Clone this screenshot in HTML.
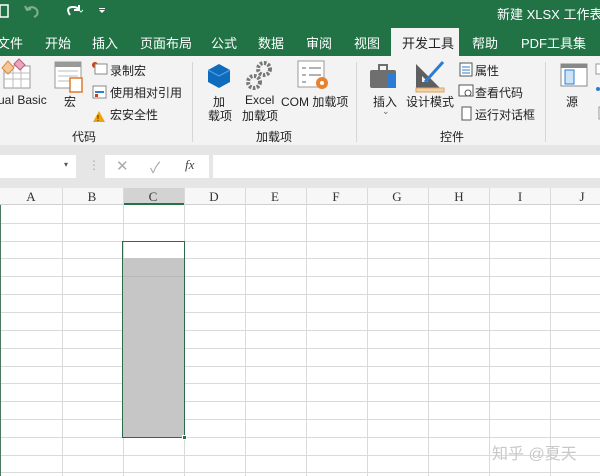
<!DOCTYPE html>
<html><head><meta charset="utf-8"><style>
*{margin:0;padding:0;box-sizing:border-box}
body{width:600px;height:476px;overflow:hidden;position:relative;background:#fff;font-family:"Liberation Sans","Noto Sans CJK SC",sans-serif;}
.a{position:absolute;white-space:nowrap}
.tab{position:absolute;top:33px;font-size:13px;color:#fff}
.t{position:absolute;font-size:12px;color:#222;white-space:nowrap}
.vl{position:absolute;width:1px;background:#dadada}
.hl{position:absolute;height:1px;left:0;width:600px;background:#dadada}
.col{position:absolute;top:189px;font-family:"Liberation Serif",serif;font-size:13px;color:#333;width:20px;text-align:center}
</style></head><body>
<!-- title bar -->
<div class="a" style="left:0;top:0;width:600px;height:56px;background:#217346"></div>
<svg class="a" style="left:0;top:0" width="120" height="26">
<rect x="0" y="5" width="8" height="12" fill="none" stroke="#fff" stroke-width="1.5"/>
<path d="M27 9 q6 -4 10 1 q2 5 -3 7" fill="none" stroke="#7fae92" stroke-width="2"/><path d="M25 6 l2 4 l4 -1" fill="none" stroke="#7fae92" stroke-width="2"/>
<path d="M70 15 q-5 -8 3 -8 q4 0 5 2" fill="none" stroke="#fff" stroke-width="2"/><path d="M79 5 l0 5 l-5 0" fill="none" stroke="#fff" stroke-width="2"/>
<path d="M79 10 l2 2 l2 -2" fill="none" stroke="#cfe" stroke-width="1"/>
<path d="M99 10 l3 3 l3 -3z" fill="#fff"/><rect x="99" y="8" width="6" height="1" fill="#fff"/>
</svg>
<div class="a" style="left:497px;top:4px;font-size:13px;color:#fff">新建 XLSX 工作表 (2</div>
<!-- tabs -->
<div class="a" style="left:391px;top:28px;width:68px;height:29px;background:#f3f3f3"></div>
<div class="tab" style="left:-3px">文件</div>
<div class="tab" style="left:45px">开始</div>
<div class="tab" style="left:92px">插入</div>
<div class="tab" style="left:140px">页面布局</div>
<div class="tab" style="left:211px">公式</div>
<div class="tab" style="left:258px">数据</div>
<div class="tab" style="left:306px">审阅</div>
<div class="tab" style="left:354px">视图</div>
<div class="tab" style="left:402px;color:#222">开发工具</div>
<div class="tab" style="left:472px">帮助</div>
<div class="tab" style="left:521px">PDF工具集</div>
<!-- ribbon -->
<div class="a" style="left:0;top:56px;width:600px;height:89px;background:#f3f3f3"></div>
<div class="a" style="left:192px;top:62px;width:1px;height:80px;background:#d6d6d6"></div>
<div class="a" style="left:356px;top:62px;width:1px;height:80px;background:#d6d6d6"></div>
<div class="a" style="left:545px;top:62px;width:1px;height:80px;background:#d6d6d6"></div>
<svg class="a" style="left:0;top:56px" width="600" height="45">
<!-- VB -->
<rect x="4" y="10" width="26" height="22" fill="#fff" stroke="#999"/><path d="M4 17h26M4 23h26M13 10v22M21 10v22" stroke="#bbb"/>
<path d="M2 12 l6 -7 l6 7 l-6 6z" fill="#f6c79a" stroke="#d9893b"/><path d="M14 8 l5 -5 l6 6 l-5 5z" fill="#e9a6c0" stroke="#c0587f"/>
<!-- macro -->
<rect x="55" y="6" width="26" height="26" fill="#fff" stroke="#999"/><rect x="55" y="6" width="26" height="5" fill="#999"/><path d="M58 15h20M58 20h20M58 25h14" stroke="#bbb"/>
<rect x="70" y="22" width="12" height="14" fill="#fff" stroke="#e07a2c" stroke-width="1.5"/>
<!-- small icons -->
<circle cx="95" cy="9" r="3" fill="#d83b01"/><rect x="95" y="8" width="12" height="10" fill="#fff" stroke="#888"/>
<rect x="93" y="30" width="13" height="12" fill="#fff" stroke="#888"/><path d="M95 36h9" stroke="#2b7cd3" stroke-width="2"/><rect x="95" y="38" width="3" height="3" fill="#d83b01"/>
<!-- cube -->
<path d="M219 8 l11 6 v12 l-11 6 l-11 -6 v-12z" fill="#0f6cbd"/><path d="M208 14 l11 6 l11 -6" stroke="#5aa0e6" fill="none"/>
<!-- gears -->
<circle cx="264" cy="13" r="6" fill="none" stroke="#777" stroke-width="4" stroke-dasharray="2.5 1.5"/><circle cx="254" cy="26" r="6" fill="none" stroke="#777" stroke-width="4" stroke-dasharray="2.5 1.5"/>
<!-- COM -->
<rect x="298" y="5" width="26" height="26" fill="#fff" stroke="#999"/><path d="M302 12h4M309 12h12M302 19h4M309 19h12M302 26h4" stroke="#666"/>
<circle cx="322" cy="27" r="6" fill="#e8822e"/><circle cx="322" cy="27" r="2" fill="#fff"/>
<!-- insert -->
<rect x="370" y="14" width="26" height="18" rx="2" fill="#6f6f6f"/><rect x="379" y="9" width="8" height="6" fill="none" stroke="#6f6f6f" stroke-width="2"/><rect x="388" y="18" width="8" height="14" fill="#2b7cd3"/>
<!-- design -->
<path d="M416 8 v24 h24z" fill="#5f5f5f"/><path d="M422 20 v6 h6z" fill="#f3f3f3"/><path d="M425 26 l18 -20" stroke="#2b7cd3" stroke-width="3"/><rect x="416" y="32" width="28" height="4" fill="#f3d2a8" stroke="#d9a46a"/>
<!-- small right -->
<rect x="460" y="7" width="12" height="13" fill="#fff" stroke="#555"/><path d="M462 11h8M462 14h8M462 17h8" stroke="#2b7cd3"/>
<rect x="459" y="29" width="14" height="11" fill="#fff" stroke="#555"/><circle cx="468" cy="37" r="3" fill="none" stroke="#555"/>
<rect x="462" y="51" width="9" height="13" fill="#fff" stroke="#555"/>
<!-- source -->
<rect x="561" y="8" width="26" height="22" fill="#fff" stroke="#888"/><rect x="561" y="8" width="26" height="4" fill="#888"/><rect x="565" y="14" width="9" height="14" fill="#cfe3f7" stroke="#2b7cd3"/>
<rect x="596" y="8" width="6" height="10" fill="#fff" stroke="#999"/><circle cx="598" cy="33" r="2" fill="#2b7cd3"/>
</svg>
<svg class="a" style="left:0;top:104px" width="600" height="20"><path d="M93 18 l6 -11 l6 11z" fill="#f0a30a"/><text x="98" y="17" font-size="8" fill="#000" font-family="Liberation Sans" text-anchor="middle">!</text><rect x="462" y="3" width="9" height="13" fill="#fff" stroke="#555"/><rect x="599" y="3" width="6" height="12" fill="#fff" stroke="#999"/></svg>
<div class="t" style="left:-2px;top:93px">ual Basic</div>
<div class="t" style="left:64px;top:93px">宏</div>
<div class="t" style="left:110px;top:62px">录制宏</div>
<div class="t" style="left:110px;top:84px">使用相对引用</div>
<div class="t" style="left:110px;top:106px">宏安全性</div>
<div class="t" style="left:72px;top:128px">代码</div>
<div class="t" style="left:213px;top:93px">加</div>
<div class="t" style="left:208px;top:107px">载项</div>
<div class="t" style="left:245px;top:93px">Excel</div>
<div class="t" style="left:242px;top:107px">加载项</div>
<div class="t" style="left:281px;top:93px">COM 加载项</div>
<div class="t" style="left:256px;top:128px">加载项</div>
<div class="t" style="left:373px;top:93px">插入</div>
<div class="t" style="left:382px;top:106px;font-size:9px;color:#666">⌄</div>
<div class="t" style="left:406px;top:93px">设计模式</div>
<div class="t" style="left:475px;top:62px">属性</div>
<div class="t" style="left:475px;top:84px">查看代码</div>
<div class="t" style="left:475px;top:106px">运行对话框</div>
<div class="t" style="left:440px;top:128px">控件</div>
<div class="t" style="left:566px;top:93px">源</div>
<!-- formula bar -->
<div class="a" style="left:0;top:145px;width:600px;height:43px;background:#e6e6e6"></div>
<div class="a" style="left:0;top:155px;width:76px;height:23px;background:#fff"></div>
<div class="a" style="left:64px;top:160px;font-size:8px;color:#555">▾</div>
<div class="a" style="left:88px;top:158px;font-size:12px;color:#aaa">⋮</div>
<div class="a" style="left:105px;top:155px;width:104px;height:23px;background:#fff"></div>
<div class="a" style="left:116px;top:157px;font-size:15px;color:#aaa">✕</div>
<div class="a" style="left:150px;top:157px;font-size:15px;color:#aaa">✓</div>
<div class="a" style="left:185px;top:157px;font-size:13px;color:#444;font-family:'Liberation Serif',serif;font-style:italic">fx</div>
<div class="a" style="left:213px;top:155px;width:387px;height:23px;background:#fff"></div>
<!-- grid header -->
<div class="a" style="left:0;top:188px;width:600px;height:17px;background:#f7f7f7;border-bottom:1px solid #d0d0d0"></div>
<div class="a" style="left:123px;top:188px;width:61px;height:17px;background:#d3d3d3;border-bottom:2px solid #217346"></div>
<div class="vl" style="left:62px;top:188px;height:288px"></div>
<div class="vl" style="left:123px;top:188px;height:288px"></div>
<div class="vl" style="left:184px;top:188px;height:288px"></div>
<div class="vl" style="left:245px;top:188px;height:288px"></div>
<div class="vl" style="left:306px;top:188px;height:288px"></div>
<div class="vl" style="left:367px;top:188px;height:288px"></div>
<div class="vl" style="left:428px;top:188px;height:288px"></div>
<div class="vl" style="left:489px;top:188px;height:288px"></div>
<div class="vl" style="left:550px;top:188px;height:288px"></div>
<div class="col" style="left:21px">A</div><div class="col" style="left:82px">B</div><div class="col" style="left:143px">C</div><div class="col" style="left:204px">D</div><div class="col" style="left:265px">E</div><div class="col" style="left:326px">F</div><div class="col" style="left:387px">G</div><div class="col" style="left:449px">H</div><div class="col" style="left:510px">I</div><div class="col" style="left:572px">J</div>
<div class="hl" style="top:223px"></div><div class="hl" style="top:241px"></div><div class="hl" style="top:258px"></div><div class="hl" style="top:276px"></div><div class="hl" style="top:294px"></div><div class="hl" style="top:312px"></div><div class="hl" style="top:330px"></div><div class="hl" style="top:348px"></div><div class="hl" style="top:366px"></div><div class="hl" style="top:383px"></div><div class="hl" style="top:401px"></div><div class="hl" style="top:419px"></div><div class="hl" style="top:437px"></div><div class="hl" style="top:455px"></div><div class="hl" style="top:472px"></div>
<div class="a" style="left:0;top:205px;width:1px;height:271px;background:#4a7a5e"></div>
<!-- selection -->
<div class="a" style="left:123px;top:258px;width:61px;height:179px;background:#c6c6c6"></div>
<div class="a" style="left:123px;top:276px;width:61px;height:1px;background:#b8b8b8"></div>
<div class="a" style="left:122px;top:241px;width:63px;height:197px;border:1.5px solid #2d6a48"></div>
<div class="a" style="left:182px;top:435px;width:5px;height:5px;background:#217346;border:1px solid #fff"></div>
<div class="a" style="left:492px;top:440px;font-size:16px;color:#c8c8c8">知乎 @夏天</div>
</body></html>
